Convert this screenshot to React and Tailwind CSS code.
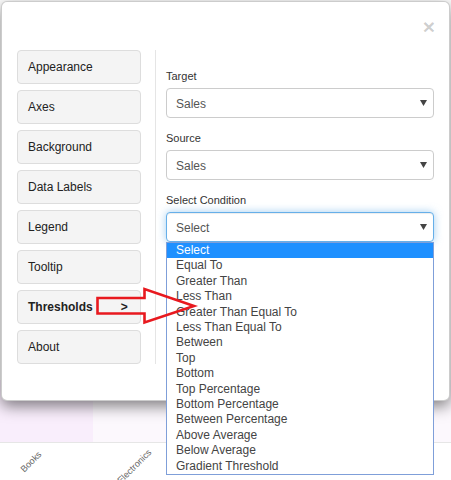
const navItems = [
  "Appearance",
  "Axes",
  "Background",
  "Data Labels",
  "Legend",
  "Tooltip",
  "Thresholds",
  "About",
];

const conditions = [
  "Select",
  "Equal To",
  "Greater Than",
  "Less Than",
  "Greater Than Equal To",
  "Less Than Equal To",
  "Between",
  "Top",
  "Bottom",
  "Top Percentage",
  "Bottom Percentage",
  "Between Percentage",
  "Above Average",
  "Below Average",
  "Gradient Threshold",
];

const Caret = () => (
  <svg width="7" height="6" viewBox="0 0 7 6" className="shrink-0">
    <path d="M0 0 H7 L3.5 6 Z" fill="#444" />
  </svg>
);

const SelectBox = ({ value, focused, children }) => (
  <div className="relative">
    <div
      className={
        focused
          ? "flex h-[30px] items-center justify-between rounded-[4px] border border-[#66afe9] bg-white pl-[9px] pr-[6px] text-[12px] text-[#555] shadow-[inset_0_1px_1px_rgba(0,0,0,0.075),0_0_8px_rgba(102,175,233,0.6)]"
          : "flex h-[30px] items-center justify-between rounded-[4px] border border-[#ccc] bg-white pl-[9px] pr-[6px] text-[12px] text-[#555]"
      }
    >
      <span className="pt-[1px]">{value}</span>
      <Caret />
    </div>
    {children}
  </div>
);

export default function App() {
  return (
    <div className="relative h-[480px] w-[451px] overflow-hidden bg-white font-['Liberation_Sans',Arial,sans-serif]">
      {/* page behind the modal */}
      <div className="flex flex-col">
        <div className="h-[380px]" />
        <div className="flex h-[63px] border-b border-[#e6e6e6]">
          <div className="w-[93px] bg-[#f9eefc]" />
          <div className="flex-1 bg-[#fcf8fd]" />
        </div>
        <svg width="451" height="37" className="block">
          <g fontSize="9" fill="#666" fontFamily="Liberation Sans, Arial, sans-serif">
            <text x="42" y="12" textAnchor="end" transform="rotate(-45 42 12)">Books</text>
            <text x="152" y="10" textAnchor="end" transform="rotate(-45 152 10)">Electronics</text>
          </g>
        </svg>
      </div>

      {/* modal */}
      <div className="absolute left-[1px] top-[1px] h-[400px] w-[449px] rounded-[6px] border border-black/20 bg-white shadow-[0_5px_15px_rgba(0,0,0,0.5)]">
        <div className="flex h-[48px] justify-end pr-[14px] pt-[14px]">
          <span className="text-[21px] font-bold leading-none text-black/20">×</span>
        </div>
        <div className="flex px-[15px]">
          <div className="flex w-[124px] flex-col gap-[6px]">
            {navItems.map((item) => (
              <div
                key={item}
                className="flex h-[34px] items-center rounded-[4px] border border-[#ddd] bg-[#f4f4f4] px-[10px] text-[12px] text-[#222]"
              >
                {item === "Thresholds" ? (
                  <>
                    <span className="font-bold">{item}</span>
                    <span className="ml-[28px] font-bold">&gt;</span>
                  </>
                ) : (
                  item
                )}
              </div>
            ))}
          </div>
          <div className="ml-[14px] flex-1 border-l border-[#e5e5e5] pl-[10px] pt-[19px]">
            <div className="mb-[4px] text-[11px] leading-[15px] text-[#333]">Target</div>
            <SelectBox value="Sales" />
            <div className="mb-[4px] mt-[13px] text-[11px] leading-[15px] text-[#333]">Source</div>
            <SelectBox value="Sales" />
            <div className="mb-[4px] mt-[13px] text-[11px] leading-[15px] text-[#333]">Select Condition</div>
            <SelectBox value="Select" focused>
              <ul className="absolute left-0 right-0 top-full z-10 border border-[#7f9fd9] bg-white text-[12px] leading-[15.4px] text-[#444]">
                {conditions.map((c, i) => (
                  <li
                    key={c}
                    className={i === 0 ? "bg-[#1e90ff] pl-[9px] text-white" : "pl-[9px]"}
                  >
                    {c}
                  </li>
                ))}
              </ul>
            </SelectBox>
          </div>
        </div>
      </div>

      {/* red callout arrow */}
      <svg
        width="104"
        height="40"
        viewBox="0 0 104 40"
        className="pointer-events-none absolute left-[95px] top-[286px] z-20"
      >
        <polygon
          points="2.5,12 49.5,12 49.5,3 99,20 49.5,36.5 49.5,27.5 2.5,27.5"
          fill="none"
          stroke="#e8191f"
          strokeWidth="2.6"
          strokeLinejoin="miter"
        />
      </svg>
    </div>
  );
}
